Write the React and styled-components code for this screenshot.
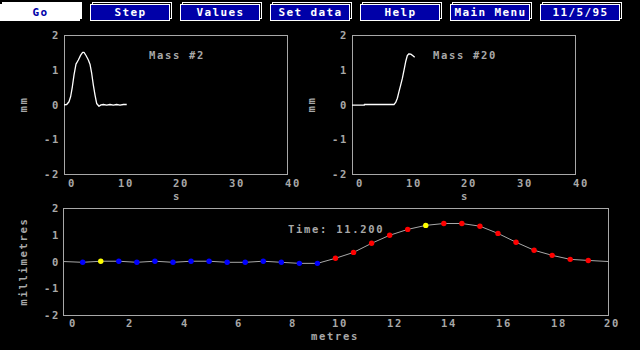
import React from 'react';
import styled, { createGlobalStyle } from 'styled-components';

const GREY = '#a8a8a8';
const NAVY = '#0000a8';
const FONT = '"DejaVu Sans Mono", "Liberation Mono", monospace';

const GlobalStyle = createGlobalStyle`
  html, body {
    margin: 0;
    background: #000;
  }
  body {
    font-family: ${FONT};
  }
`;

const Screen = styled.div`
  width: 640px;
  height: 350px;
  background: #000;
  display: flex;
  flex-direction: column;
  overflow: hidden;
`;

const Toolbar = styled.div`
  display: flex;
  align-items: flex-start;
  gap: 10px;
  height: 25px;
  padding-top: 4px;
  box-sizing: border-box;
`;

const MenuButton = styled.button`
  width: 80px;
  height: 17px;
  box-sizing: border-box;
  margin: 0;
  padding: 0 0 0 1px;
  border: 1px solid #fff;
  border-radius: 0;
  background: ${p => (p.$active ? '#fff' : NAVY)};
  color: ${p => (p.$active ? NAVY : '#fff')};
  font: bold 11px/15px ${FONT};
  letter-spacing: 1.4px;
  white-space: nowrap;
  box-shadow: 2px -2px 0 -1px ${p => (p.$active ? '#fff' : '#000')}, 2px -2px 0 0 #fff;
`;

const ChartsRow = styled.div`
  display: grid;
  grid-template-columns: 288px 288px;
  height: 175px;
`;

const ChartSvg = styled.svg`
  display: block;
  overflow: visible;
`;

const Frame = styled.rect`
  fill: none;
  stroke: ${GREY};
  stroke-width: 1;
`;

const Label = styled.text`
  fill: ${GREY};
  font-family: ${FONT};
  font-weight: bold;
  font-size: 10.5px;
  letter-spacing: 1.7px;
`;

const Trace = styled.polyline`
  fill: none;
  stroke: ${p => p.$color};
  stroke-width: ${p => p.$width || 1};
  stroke-linejoin: round;
`;

const buttons = ['Go', 'Step', 'Values', 'Set data', 'Help', 'Main Menu', '11/5/95'];

const mass2 = [
  [0, -0.01], [0.48, 0], [0.89, 0.08], [1.19, 0.23], [1.49, 0.51], [1.79, 0.85],
  [2.14, 1.16], [2.56, 1.28], [2.98, 1.42], [3.33, 1.5], [3.57, 1.5], [3.93, 1.41],
  [4.35, 1.28], [4.64, 1.16], [4.94, 0.9], [5.24, 0.56], [5.54, 0.27], [5.83, 0.03],
  [6.25, -0.05], [6.61, -0.01], [7.02, 0], [7.62, -0.02], [8.21, 0], [8.81, -0.02],
  [9.4, 0], [10, -0.02], [10.6, 0], [11.2, 0],
];

const mass20 = [
  [0, -0.02], [2.2, -0.02], [2.2, 0], [7.5, 0], [7.8, 0.06], [8.1, 0.18], [8.39, 0.37],
  [8.69, 0.56], [8.99, 0.75], [9.29, 0.99], [9.58, 1.23], [9.88, 1.41], [10.18, 1.46],
  [10.48, 1.45], [10.83, 1.41], [11.19, 1.36],
];

// displacement of each mass along the line, mm
const wave = [
  -0.03, 0.01, 0.01, -0.03, 0.01, -0.03, 0.01, 0.01, -0.03, -0.03, 0.01, -0.03, -0.07, -0.07,
  0.12, 0.34, 0.68, 0.98, 1.2, 1.35, 1.42, 1.42, 1.32, 1.05, 0.72, 0.42, 0.23, 0.08, 0.04,
];

const timeTicks = [[0, 68], [10, 118], [20, 173], [30, 229], [40, 285]];
const metreTicks = [
  [0, 69], [2, 126], [4, 181], [6, 235], [8, 289], [10, 332],
  [12, 387], [14, 441], [16, 496], [18, 551], [20, 604],
];

function TimeChart({ title, points }) {
  const X = t => 64 + t * 5.6;
  const Y = v => 79.5 - v * 34.75;

  return (
    <ChartSvg width="288" height="175">
      <Frame x="64.5" y="10.5" width="223" height="139" />
      {[2, 1, 0, -1, -2].map(v => (
        <Label key={v} x="60" y={Y(v) + 4} textAnchor="end">{v}</Label>
      ))}
      {timeTicks.map(([v, left]) => (
        <Label key={v} x={left} y="162">{v}</Label>
      ))}
      <Label x="173" y="174.5">s</Label>
      <Label x="27" y="79.5" textAnchor="middle" transform="rotate(-90 27 79.5)">mm</Label>
      <Label x="177" y="34" textAnchor="middle">{title}</Label>
      <Trace $color="#fff" $width={1.3} points={points.map(([t, v]) => `${X(t)},${Y(v)}`).join(' ')} />
    </ChartSvg>
  );
}

function WaveChart() {
  const X = m => 63 + m * 27.25;
  const Y = v => 61.5 - v * 26.75;
  const dots = wave.map((v, i) => ({ m: 0.723 + i * 0.6626, v, i }));
  const line = [[0, 0], ...dots.map(d => [d.m, d.v]), [20, 0]];
  const dotColor = i => (i === 1 || i === 19 ? '#ffff00' : i < 14 ? '#0000ff' : '#ff0000');

  return (
    <ChartSvg width="640" height="150">
      <Frame x="63.5" y="8.5" width="545" height="107" />
      {[2, 1, 0, -1, -2].map(v => (
        <Label key={v} x="60" y={Y(v) + 4} textAnchor="end">{v}</Label>
      ))}
      {metreTicks.map(([v, left]) => (
        <Label key={v} x={left} y="127">{v}</Label>
      ))}
      <Label x="311" y="139.5">metres</Label>
      <Label x="27" y="61.5" textAnchor="middle" transform="rotate(-90 27 61.5)">millimetres</Label>
      <Label x="288" y="33">Time: 11.200</Label>
      <Trace $color={GREY} points={line.map(([m, v]) => `${X(m)},${Y(v)}`).join(' ')} />
      {dots.map(d => (
        <circle key={d.i} cx={X(d.m)} cy={Y(d.v)} r="2.7" fill={dotColor(d.i)} />
      ))}
    </ChartSvg>
  );
}

export default function App() {
  return (
    <>
      <GlobalStyle />
      <Screen>
        <Toolbar>
          {buttons.map(label => (
            <MenuButton key={label} $active={label === 'Go'}>{label}</MenuButton>
          ))}
        </Toolbar>
        <ChartsRow>
          <TimeChart title="Mass #2" points={mass2} />
          <TimeChart title="Mass #20" points={mass20} />
        </ChartsRow>
        <WaveChart />
      </Screen>
    </>
  );
}
